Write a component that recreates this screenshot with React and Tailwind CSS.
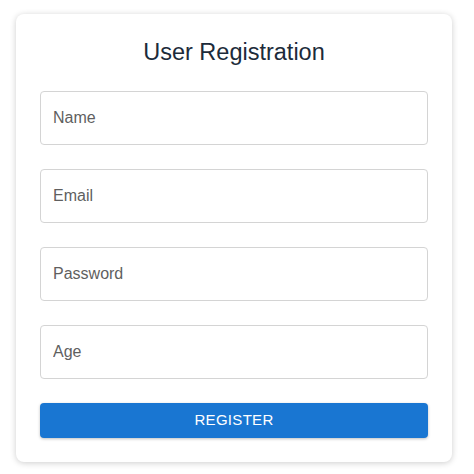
import React, { useState } from 'react';

const fields = [
  { name: 'name', label: 'Name', type: 'text' },
  { name: 'email', label: 'Email', type: 'email' },
  { name: 'password', label: 'Password', type: 'password' },
  { name: 'age', label: 'Age', type: 'number' },
];

export default function App() {
  const [form, setForm] = useState({ name: '', email: '', password: '', age: '' });

  const update = (e) => setForm({ ...form, [e.target.name]: e.target.value });

  return (
    <div className="min-h-screen bg-white pt-[14px] pl-[16px]" style={{ fontFamily: '"Liberation Sans", Arial, sans-serif' }}>
      {/* Registration card */}
      <form
        onSubmit={(e) => e.preventDefault()}
        className="w-[436px] rounded-lg bg-white px-6 pt-6 pb-6 shadow-[0_1px_6px_rgba(0,0,0,0.2)]"
      >
        <h1 className="text-center text-[23.5px] leading-[29px] text-[#1c2b3a] mb-6">User Registration</h1>

        <div className="flex flex-col gap-6">
          {fields.map((f) => (
            <input
              key={f.name}
              name={f.name}
              type={f.type}
              placeholder={f.label}
              value={form[f.name]}
              onChange={update}
              className="h-[54px] w-full rounded border border-[#d4d4d4] px-3 text-[16px] text-[#333] placeholder:text-[#5f5f5f] outline-none"
            />
          ))}

          <button
            type="submit"
            className="h-[35px] w-full rounded bg-[#1976d2] text-[15px] text-white tracking-[0.3px] shadow-[0_1px_3px_rgba(0,0,0,0.25)]"
          >
            REGISTER
          </button>
        </div>
      </form>
    </div>
  );
}
